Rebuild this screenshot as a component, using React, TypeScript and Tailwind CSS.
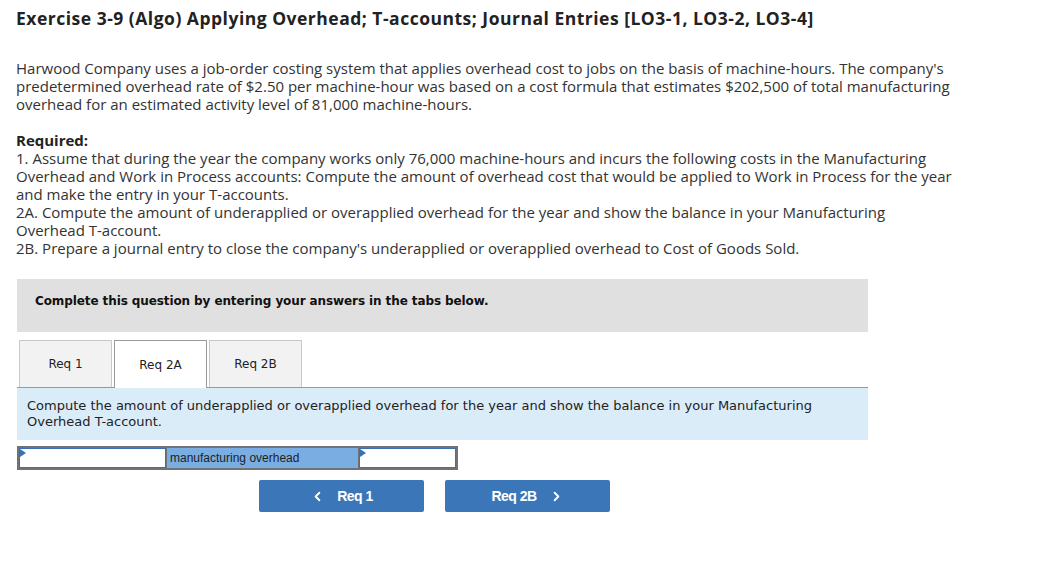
import * as React from "react";
import { ChevronLeft, ChevronRight } from "lucide-react";

const body = "font-['Open_Sans',sans-serif]";
const verdana = "font-['DejaVu_Sans',Verdana,sans-serif]";

const tabs = [
  { label: "Req 1", active: false },
  { label: "Req 2A", active: true },
  { label: "Req 2B", active: false },
];

const Marker: React.FC = () => (
  <svg className="absolute left-0 top-0" width="6" height="8" viewBox="0 0 6 8">
    <path d="M0 0 L6 4 L0 8 Z" fill="#3b6fb6" />
  </svg>
);

export default function App() {
  return (
    <div className={`w-[1045px] h-[582px] bg-white text-[#1a1a1a] ${body}`}>
      <div className="pl-4 pt-[6px]">
        <h1 className="text-[17.5px] font-bold tracking-[0.5px] leading-6 text-[#222] whitespace-nowrap">
          Exercise 3-9 (Algo) Applying Overhead; T-accounts; Journal Entries [LO3-1, LO3-2, LO3-4]
        </h1>

        <p className="mt-[29px] text-[15px] leading-[18px] text-[#333] whitespace-nowrap">
          Harwood Company uses a job-order costing system that applies overhead cost to jobs on the basis of machine-hours. The company's
          <br />
          predetermined overhead rate of $2.50 per machine-hour was based on a cost formula that estimates $202,500 of total manufacturing
          <br />
          overhead for an estimated activity level of 81,000 machine-hours.
        </p>

        <div className="mt-[18px] text-[15px] leading-[18px] text-[#333] whitespace-nowrap">
          <p className="font-bold text-[#222]">Required:</p>
          <p>
            1. Assume that during the year the company works only 76,000 machine-hours and incurs the following costs in the Manufacturing
            <br />
            Overhead and Work in Process accounts: Compute the amount of overhead cost that would be applied to Work in Process for the year
            <br />
            and make the entry in your T-accounts.
          </p>
          <p>
            2A. Compute the amount of underapplied or overapplied overhead for the year and show the balance in your Manufacturing
            <br />
            Overhead T-account.
          </p>
          <p>
            2B. Prepare a journal entry to close the company's underapplied or overapplied overhead to Cost of Goods Sold.
          </p>
        </div>
      </div>

      <div className={`ml-[17px] w-[851px] ${verdana}`}>
        <div className="mt-[22px] h-[53px] bg-[#e0e0e0] pl-[18px] pt-[13px]">
          <p className="text-[12px] font-bold tracking-[-0.1px] text-[#111]">
            Complete this question by entering your answers in the tabs below.
          </p>
        </div>

        <div className="mt-[8px] flex gap-[2px] pl-[2px] border-b border-[#999]">
          {tabs.map(t => (
            <div
              key={t.label}
              className={
                t.active
                  ? "w-[93px] h-[48px] -mb-px flex items-center justify-center bg-white border border-[#999] border-b-0 text-[12px] text-[#222]"
                  : "w-[93px] h-[47px] flex items-center justify-center bg-[#f2f2f2] border border-[#c8c8c8] border-b-0 text-[12px] text-[#222]"
              }
            >
              {t.label}
            </div>
          ))}
        </div>

        <div className="h-[52px] bg-[#dbecf9] pl-[10px] pt-[10px] text-[13px] leading-[16px] text-[#222] whitespace-nowrap">
          Compute the amount of underapplied or overapplied overhead for the year and show the balance in your Manufacturing
          <br />
          Overhead T-account.
        </div>

        <div className="mt-[6px] flex w-[441px] h-[24px] border-2 border-[#6f7278] font-['Liberation_Sans',Arial,sans-serif]">
          <div className="relative w-[147px] h-full bg-white border border-[#3b6fb6]">
            <Marker />
          </div>
          <div className="w-[193px] h-full bg-[#7aaee3] pl-[3px] text-[12px] leading-[20px] text-[#222] border-x border-[#6f7278]">
            manufacturing overhead
          </div>
          <div className="relative flex-1 h-full bg-white border border-[#3b6fb6]">
            <Marker />
          </div>
        </div>

        <div className="mt-[10px] flex gap-[21px] pl-[242px] font-['Liberation_Sans',Arial,sans-serif]">
          <button className="flex w-[165px] h-[32px] items-center justify-center gap-[12px] rounded-[2px] bg-[#3b76b9] text-[14px] font-bold tracking-[-0.5px] text-white">
            <ChevronLeft size={15} strokeWidth={3} />
            <span>Req 1</span>
          </button>
          <button className="flex w-[165px] h-[32px] items-center justify-center gap-[12px] rounded-[2px] bg-[#3b76b9] text-[14px] font-bold tracking-[-0.5px] text-white">
            <span>Req 2B</span>
            <ChevronRight size={15} strokeWidth={3} />
          </button>
        </div>
      </div>
    </div>
  );
}
